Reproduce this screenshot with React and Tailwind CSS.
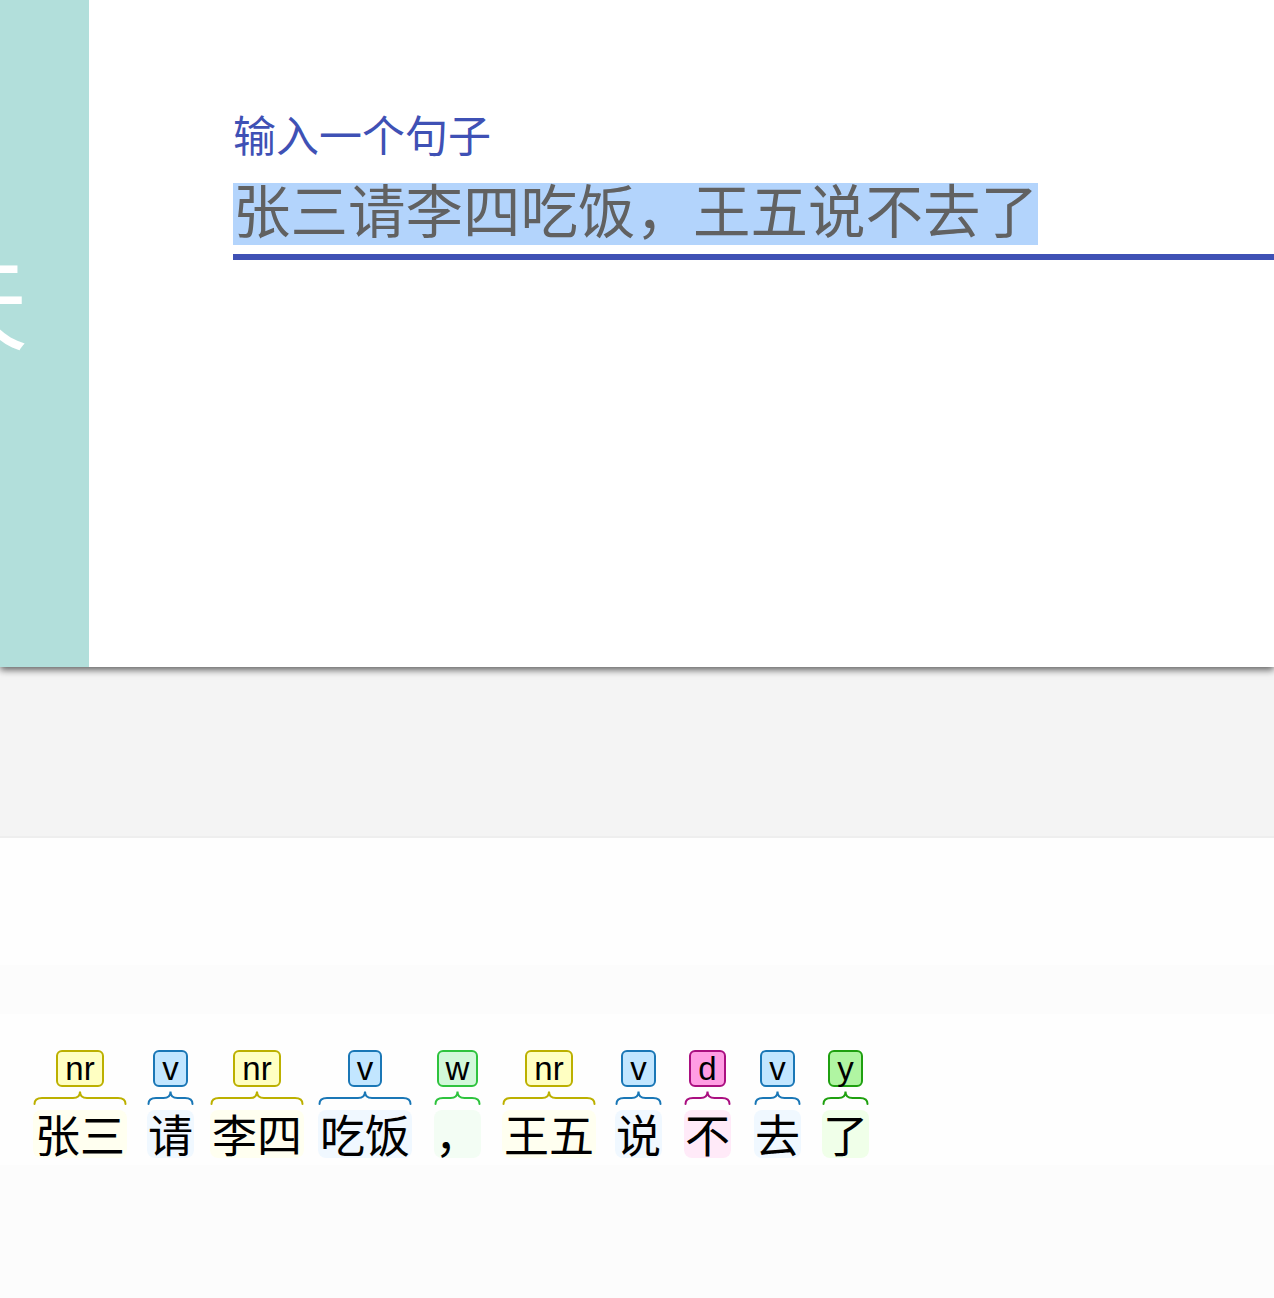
import React from 'react';

const CJK = { fontFamily: '"Noto Sans CJK SC", "Noto Sans", sans-serif' };
const LATIN = { fontFamily: '"Liberation Sans", Arial, sans-serif' };

// pos tag palette: tag border / tag fill / word fill
const TAGS = {
  nr: { border: 'border-[#bcb000]', fill: 'bg-[#ffffc2]', word: 'bg-[#fffff0]', stroke: '#bcb000' },
  v: { border: 'border-[#1a77b6]', fill: 'bg-[#c2e6ff]', word: 'bg-[#f0f8ff]', stroke: '#1a77b6' },
  w: { border: 'border-[#2ec33e]', fill: 'bg-[#d2f8da]', word: 'bg-[#f3fdf4]', stroke: '#2ec33e' },
  d: { border: 'border-[#aa0f80]', fill: 'bg-[#ff9de3]', word: 'bg-[#ffeaf8]', stroke: '#aa0f80' },
  y: { border: 'border-[#1fa010]', fill: 'bg-[#b0f5a2]', word: 'bg-[#f0ffe9]', stroke: '#1fa010' },
};

const tokens = [
  { word: '张三', tag: 'nr', gap: 'ml-[33px]' },
  { word: '请', tag: 'v', gap: 'ml-[20px]' },
  { word: '李四', tag: 'nr', gap: 'ml-[16px]' },
  { word: '吃饭', tag: 'v', gap: 'ml-[14px]' },
  { word: '，', tag: 'w', gap: 'ml-[22px]' },
  { word: '王五', tag: 'nr', gap: 'ml-[21px]' },
  { word: '说', tag: 'v', gap: 'ml-[19px]' },
  { word: '不', tag: 'd', gap: 'ml-[22px]' },
  { word: '去', tag: 'v', gap: 'ml-[23px]' },
  { word: '了', tag: 'y', gap: 'ml-[21px]' },
];

function Brace({ width, color }) {
  const m = width / 2;
  const d = `M1.5,14 Q1.5,8 9,8 L${m - 7},8 Q${m},8 ${m},1.5 Q${m},8 ${m + 7},8 L${width - 9},8 Q${width - 1.5},8 ${width - 1.5},14`;
  return (
    <svg width={width} height="15" viewBox={`0 0 ${width} 15`} className="block">
      <path d={d} fill="none" stroke={color} strokeWidth="2" strokeLinecap="round" />
    </svg>
  );
}

function Token({ word, tag, gap }) {
  const c = TAGS[tag];
  const width = word.length === 2 ? 94 : 47;
  return (
    <div className={`flex flex-col items-center ${gap}`}>
      <div
        className={`border-[2.5px] ${c.border} ${c.fill} rounded-[6px] px-[7px] text-[33px] leading-[33px] text-black`}
        style={LATIN}
      >
        {tag}
      </div>
      <div className="mt-[3px]">
        <Brace width={width} color={c.stroke} />
      </div>
      <div
        className={`mt-[5px] ${c.word} rounded-[8px] h-[48px] text-center text-[45px] leading-[48px] text-black ${word.length === 2 ? 'w-[94px]' : 'w-[47px]'}`}
        style={CJK}
      >
        {word}
      </div>
    </div>
  );
}

export default function App() {
  return (
    <div className="w-full min-h-[1298px] bg-[#fcfcfc] overflow-hidden">
      {/* input card */}
      <div className="relative z-10 flex h-[667px] shadow-[0_3px_7px_rgba(0,0,0,0.6)]">
        <div className="w-[89px] shrink-0 bg-[#b2dfdb] overflow-hidden">
          <div className="pt-[249px] -ml-[72px] text-[100px] leading-none text-white" style={CJK}>
            天
          </div>
        </div>
        <div className="flex-1 bg-white pl-[144px] pt-[112px]">
          <div className="text-[43px] leading-none text-[#3f51b5]" style={CJK}>
            输入一个句子
          </div>
          <div className="mt-[28px] h-[62px]">
            <span
              className="inline-block h-[62px] bg-[#b3d4fc] text-[57.5px] leading-[50px] text-[#616161] whitespace-nowrap"
              style={CJK}
            >
              张三请李四吃饭，王五说不去了
            </span>
          </div>
          <div className="mt-[9px] h-[6px] bg-[#3f51b5]" />
        </div>
      </div>

      <div className="h-[171px] bg-[#f4f4f4] border-b-2 border-[#eeeeee]" />
      <div className="h-[127px] bg-[#fefefe]" />
      <div className="h-[49px] bg-[#fcfcfc]" />

      {/* segmentation result */}
      <div className="bg-[#fefefe] h-[151px] pt-[36px] flex items-start">
        {tokens.map((t, i) => (
          <Token key={i} {...t} />
        ))}
      </div>
      <div className="h-[133px] bg-[#fcfcfc]" />
    </div>
  );
}
